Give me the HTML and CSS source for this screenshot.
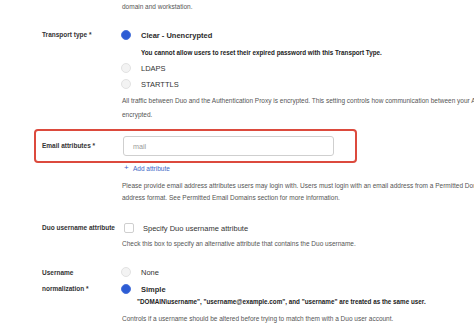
FILE: index.html
```html
<!DOCTYPE html>
<html>
<head>
<meta charset="utf-8">
<link rel="stylesheet" href="styles.css">
</head>
<body>
<div class="page">
  <div class="row">
    <div class="label"></div>
    <div class="content"><p class="desc">domain and workstation.</p></div>
  </div>

  <div class="row transport">
    <div class="label">Transport type *</div>
    <div class="content">
      <div class="option"><span class="radio on"></span><span class="opt-text strong">Clear - Unencrypted</span></div>
      <p class="note">You cannot allow users to reset their expired password with this Transport Type.</p>
      <div class="option"><span class="radio"></span><span class="opt-text">LDAPS</span></div>
      <div class="option"><span class="radio"></span><span class="opt-text">STARTTLS</span></div>
      <p class="desc traffic">All traffic between Duo and the Authentication Proxy is encrypted. This setting controls how communication between your Authentication Proxy and your directory server is<br>encrypted.</p>
    </div>
  </div>

  <div class="highlight">
    <div class="label box-label">Email attributes *</div>
    <div class="input"><span class="placeholder">mail</span></div>
  </div>

  <div class="sub add"><span class="plus">+</span><span>Add attribute</span></div>

  <p class="sub desc please">Please provide email address attributes users may login with. Users must login with an email address from a Permitted Domain in email<br>address format. See Permitted Email Domains section for more information.</p>

  <div class="row duo">
    <div class="label">Duo username attribute</div>
    <div class="content">
      <div class="option"><span class="checkbox"></span><span class="opt-text">Specify Duo username attribute</span></div>
      <p class="desc check">Check this box to specify an alternative attribute that contains the Duo username.</p>
    </div>
  </div>

  <div class="row norm">
    <div class="label two-line">Username<br>normalization *</div>
    <div class="content">
      <div class="option"><span class="radio"></span><span class="opt-text">None</span></div>
      <div class="option simple"><span class="radio on"></span><span class="opt-text strong">Simple</span></div>
      <p class="note domain">"DOMAIN\username", "username@example.com", and "username" are treated as the same user.</p>
      <p class="desc controls">Controls if a username should be altered before trying to match them with a Duo user account.</p>
    </div>
  </div>
</div>
</body>
</html>
```

FILE: styles.css
```css
* {
  box-sizing: border-box;
  margin: 0;
  padding: 0;
}

html, body {
  width: 474px;
  height: 335px;
  overflow: hidden;
  background: #ffffff;
}

body {
  font-family: "Liberation Sans", Arial, Helvetica, sans-serif;
  color: #333333;
}

.page {
  width: 474px;
  white-space: nowrap;
}

.row {
  display: flex;
  padding-left: 42px;
}

.label {
  width: 80px;
  flex: none;
  font-size: 6.5px;
  font-weight: bold;
  line-height: 16px;
  color: #333333;
}

.content {
  flex: none;
}

.desc {
  font-size: 6.5px;
  line-height: 14px;
  color: #555555;
}

.transport {
  margin-top: 13px;
}

.option {
  display: flex;
  align-items: center;
  height: 16px;
}

.radio {
  width: 10px;
  height: 10px;
  flex: none;
  border-radius: 50%;
  margin-left: -1px;
  margin-right: 10px;
  background: #f3f3f3;
  border: 1px solid #e2e2e2;
}

.radio.on {
  background: #2d5cd4;
  border: 1px solid #4a73da;
}

.opt-text {
  font-size: 7.5px;
  color: #333333;
}

.opt-text.strong {
  font-weight: bold;
  font-size: 7.5px;
  color: #2a2a2a;
}

.note {
  font-size: 6.3px;
  font-weight: bold;
  line-height: 14px;
  margin-top: 3px;
  padding-left: 19px;
  color: #222222;
}

.traffic {
  margin-top: 2px;
}

.highlight {
  display: flex;
  align-items: center;
  margin: 7px 0 0 34px;
  width: 323px;
  height: 34px;
  border: 2px solid #dc4a3d;
  border-radius: 4px;
  padding-left: 6px;
}

.box-label {
  width: 81px;
  line-height: 12px;
}

.input {
  width: 211px;
  height: 20px;
  border: 1px solid #cfcfcf;
  border-radius: 3px;
  padding-left: 9px;
  display: flex;
  align-items: center;
}

.placeholder {
  font-size: 7.2px;
  color: #9a9a9a;
}

.sub {
  padding-left: 122px;
}

.add {
  display: flex;
  align-items: center;
  height: 10px;
  padding-left: 124px;
  font-size: 6.5px;
  color: #3a66c6;
}

.plus {
  font-size: 8px;
  width: 9px;
  line-height: 10px;
}

.please {
  margin-top: 7px;
  line-height: 12px;
}

.duo {
  margin-top: 16px;
}

.checkbox {
  width: 10px;
  height: 10px;
  flex: none;
  margin-left: 2px;
  margin-right: 9px;
  border: 1px solid #cfcfcf;
  border-radius: 2px;
  background: #ffffff;
}

.check {
  margin-top: 2px;
  line-height: 12px;
}

.norm {
  margin-top: 14px;
}

.two-line {
  padding-top: 1px;
}

.simple {
  margin-top: 1px;
}

.domain {
  margin-top: 0;
  padding-left: 15px;
  line-height: 10px;
}

.controls {
  margin-top: 6px;
  line-height: 12px;
}
```
